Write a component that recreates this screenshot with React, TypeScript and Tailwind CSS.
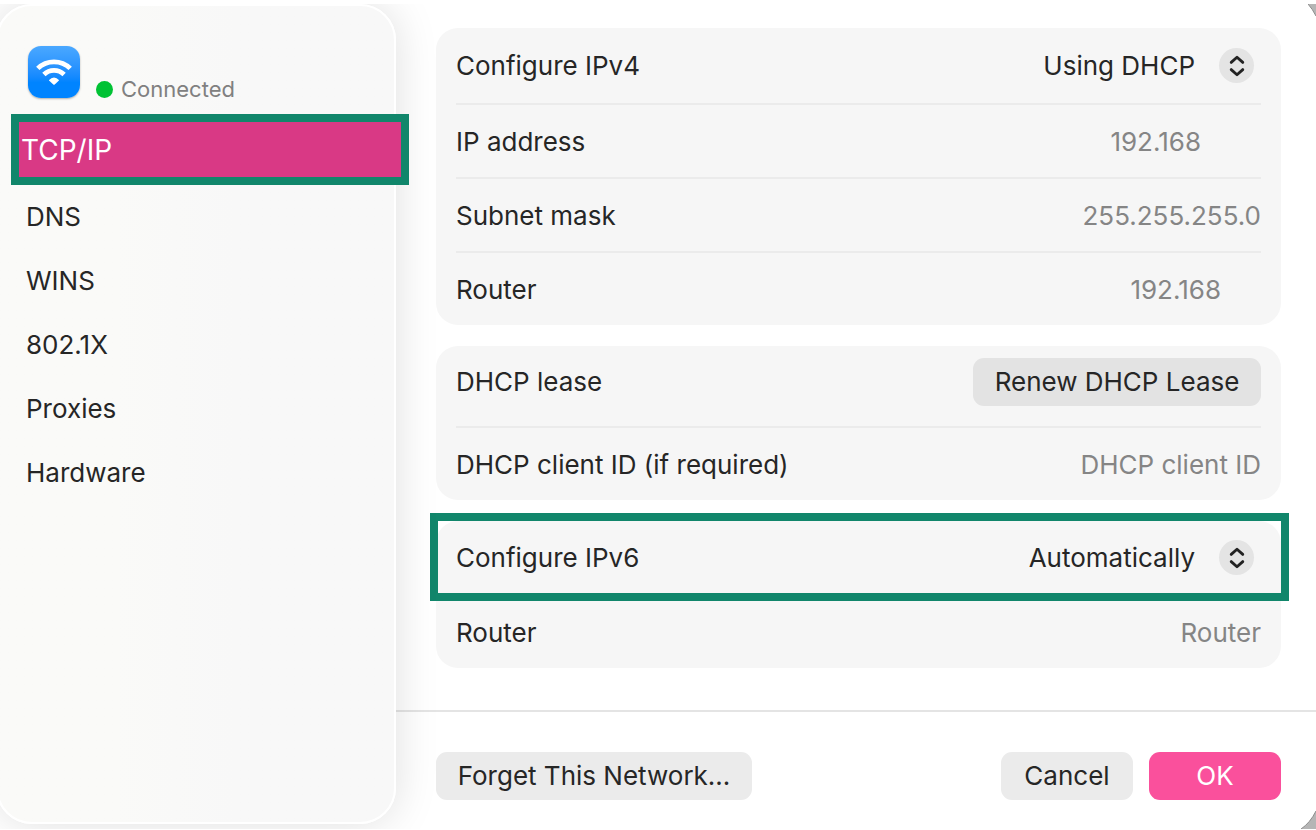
import React from "react";

const navItems = ["DNS", "WINS", "802.1X", "Proxies", "Hardware"];

function WifiBadge() {
  return (
    <svg
      viewBox="0 0 52 52"
      aria-hidden="true"
      className="size-[52px] shrink-0 rounded-[13px] bg-linear-to-b from-[#4aa8ff] to-[#0084ff] to-70% shadow-[0_1px_2px_rgba(0,0,0,0.3)]"
    >
      <g fill="none" stroke="#fff" strokeWidth="4.8">
        <path d="M9.8 22.4 A23.2 23.2 0 0 1 42.2 22.4" />
        <path d="M15.9 28.5 A14.6 14.6 0 0 1 36.1 28.5" />
      </g>
      <path d="M20.8 34.2 Q26 28.8 31.2 34.2 L26.7 38.4 Q26 39 25.3 38.4 Z" fill="#fff" />
    </svg>
  );
}

function Stepper() {
  return (
    <span className="pointer-events-none absolute right-[7px] flex size-[35px] items-center justify-center rounded-full bg-[#e4e4e4]">
      <svg
        viewBox="0 0 18 24"
        aria-hidden="true"
        className="h-6 w-[18px]"
        fill="none"
        stroke="#222"
        strokeWidth="2.8"
        strokeLinecap="round"
        strokeLinejoin="round"
      >
        <path d="M3.2 8.4 9 3.2l5.8 5.2M3.2 15.6 9 20.800l5.800-5.200" />
      </svg>
    </span>
  );
}

function PopUp({ id, options }: { id: string; options: string[] }) {
  return (
    <span className="relative flex items-center">
      <select
        id={id}
        defaultValue={options[0]}
        className="field-sizing-content appearance-none bg-transparent pr-[66px] text-right outline-none"
      >
        {options.map((o) => (
          <option key={o}>{o}</option>
        ))}
      </select>
      <Stepper />
    </span>
  );
}

const card = "rounded-[22px] bg-[#f6f6f6] px-5";
const row = "flex items-center justify-between";
const line = "border-b-2 border-[#ebebeb]";
const field =
  "w-60 bg-transparent text-right outline-none placeholder:text-[#858585] placeholder:opacity-100";
const button = "h-12 rounded-[11px]";

export default function App() {
  return (
    <div className="min-h-screen bg-white pt-1 pb-px font-['Inter','Liberation_Sans',sans-serif] text-[26px] leading-8 text-[#262626]">
      <div className="relative flex min-h-[825px] overflow-hidden bg-white">
        <aside className="z-10 mb-[5px] -ml-1 w-[400px] shrink-0 rounded-[36px] border-2 border-white bg-linear-to-r from-[#fafaf8] from-30% to-[#f8f8f8] to-60% shadow-[0_0_44px_rgba(0,0,0,0.13)]">
          <header className="flex items-end pt-10 pl-[30px]">
            <WifiBadge />
            <p className="ml-4 flex items-center gap-2 text-[22px] leading-[18px] text-[#808080]">
              <span className="size-[17px] rounded-full bg-[#00c234]" />
              Connected
            </p>
          </header>
          <nav className="pt-4">
            <a
              href="#tcpip"
              aria-current="page"
              className="-mr-[15px] ml-[13px] flex h-[71px] items-center border-8 border-[#11866b] bg-[#d93985] pl-0.5 text-[28px] text-white"
            >
              TCP/IP
            </a>
            <ul>
              {navItems.map((item) => (
                <li key={item}>
                  <a href={"#" + item} className="flex h-16 items-center pl-7">
                    {item}
                  </a>
                </li>
              ))}
            </ul>
          </nav>
        </aside>

        <main className="flex min-w-0 flex-1 flex-col">
          <div className="flex flex-1 flex-col gap-[21px] pt-6 pr-[35px] pl-10">
            <section className={card}>
              <div className={`${row} ${line} h-[77px]`}>
                <label htmlFor="ipv4">Configure IPv4</label>
                <PopUp id="ipv4" options={["Using DHCP", "Manually", "Off"]} />
              </div>
              <div className={`${row} ${line} h-[74px] pt-0.5`}>
                <span>IP address</span>
                <span className="pr-[60px] text-[#858585]">192.168</span>
              </div>
              <div className={`${row} ${line} h-[74px] pt-0.5`}>
                <span>Subnet mask</span>
                <span className="text-[#858585]">255.255.255.0</span>
              </div>
              <div className={`${row} h-[72px] pt-0.5`}>
                <span>Router</span>
                <span className="pr-10 text-[#858585]">192.168</span>
              </div>
            </section>

            <section className={card}>
              <div className={`${row} ${line} h-[82px] pb-2`}>
                <span>DHCP lease</span>
                <button type="button" className={`${button} w-72 bg-[#e3e3e3]`}>
                  Renew DHCP Lease
                </button>
              </div>
              <div className={`${row} h-[72px] pt-0.5`}>
                <label htmlFor="client">DHCP client ID (if required)</label>
                <input id="client" placeholder="DHCP client ID" className={field} />
              </div>
            </section>

            <section className={`${card} relative`}>
              <div className={`${row} ${line} h-[75px]`}>
                <label htmlFor="ipv6">Configure IPv6</label>
                <PopUp id="ipv6" options={["Automatically", "Manually", "Link-Local Only"]} />
              </div>
              <div className={`${row} h-[72px] pt-0.5`}>
                <label htmlFor="router6">Router</label>
                <input id="router6" placeholder="Router" className={field} />
              </div>
              <div className="pointer-events-none absolute -top-2 -right-2 -left-1.5 h-[88px] border-8 border-[#11866b]" />
            </section>
          </div>

          <footer className="flex items-center gap-4 border-t-2 border-[#e4e4e4] pt-10 pr-[35px] pb-[29px] pl-10">
            <button type="button" className={`${button} mr-auto w-[316px] bg-[#ebebeb]`}>
              Forget This Network...
            </button>
            <button type="button" className={`${button} w-[132px] bg-[#ebebeb]`}>
              Cancel
            </button>
            <button type="button" className={`${button} w-[132px] bg-[#fa509c] text-white`}>
              OK
            </button>
          </footer>
        </main>

        <svg viewBox="0 0 8 12" aria-hidden="true" className="absolute top-0 right-0 h-3 w-2">
          <path d="M0 0H8V12Q4.500 5 0 0Z" fill="#b5b5b5" />
          <path d="M0 0Q4.500 5 8 12" fill="none" stroke="#8c8c8c" />
        </svg>
        <svg viewBox="0 0 16 18" aria-hidden="true" className="absolute right-0 bottom-0 h-[18px] w-4">
          <path d="M16 0V18H1Q10 12 16 0Z" fill="#b5b5b5" />
          <path d="M16 0Q10 12 1 18" fill="none" stroke="#8c8c8c" />
        </svg>
      </div>
    </div>
  );
}
